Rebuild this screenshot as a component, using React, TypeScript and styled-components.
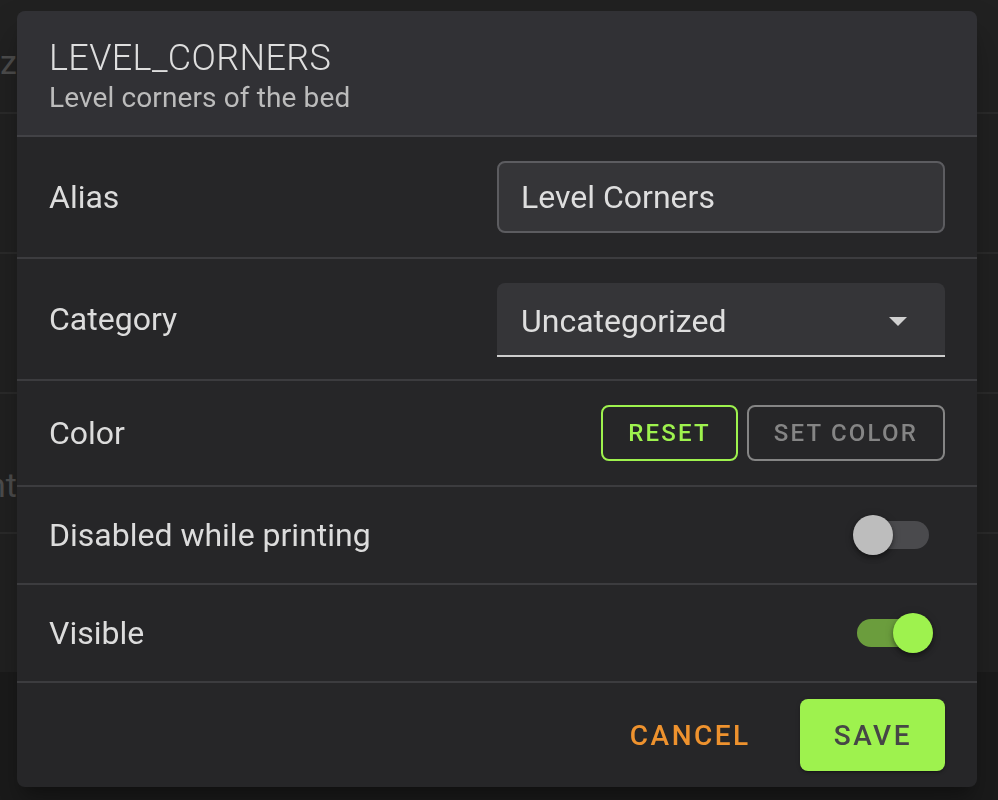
import styled, { createGlobalStyle } from "styled-components";

const GlobalStyle = createGlobalStyle`
  html, body {
    margin: 0;
    padding: 0;
    background: #1b1b1b;
  }
  body {
    font-family: Roboto, "Noto Sans", "Liberation Sans", sans-serif;
    -webkit-font-smoothing: antialiased;
  }
  * {
    box-sizing: border-box;
  }
`;

const Page = styled.div`
  width: 998px;
  height: 800px;
  overflow: hidden;
  background: #1b1b1b;
`;

const List = styled.div`
  background: #212121;
`;

const ListRow = styled.div<{ $h: number; $top: number; $indent?: number; $last?: boolean }>`
  height: ${(p) => p.$h}px;
  padding-top: ${(p) => p.$top}px;
  text-indent: ${(p) => p.$indent ?? 0}px;
  border-bottom: ${(p) => (p.$last ? "none" : "2px solid #2b2b2b")};
  font-size: 34px;
  line-height: 40px;
  color: #4d4d4d;
  white-space: nowrap;
`;

const Overlay = styled.div`
  position: fixed;
  inset: 0;
  padding: 11px 0 0 17px;
`;

const Dialog = styled.div`
  width: 960px;
  background: #262628;
  border-radius: 8px;
  overflow: hidden;
  box-shadow: 0 11px 15px -7px rgba(0, 0, 0, 0.3), 0 24px 38px 3px rgba(0, 0, 0, 0.2);
`;

const Header = styled.div`
  background: #313135;
  padding: 25px 32px 19px;
  border-bottom: 2px solid #424246;
`;

const Title = styled.div`
  font-size: 36px;
  line-height: 44px;
  font-weight: 300;
  letter-spacing: 0.35px;
  color: #dedede;
`;

const Subtitle = styled.div`
  font-size: 28px;
  line-height: 36px;
  letter-spacing: 0.12px;
  color: #bcbcbc;
`;

const Row = styled.div<{ $h: number }>`
  display: grid;
  grid-template-columns: 1fr 1fr;
  align-items: center;
  height: ${(p) => p.$h + 2}px;
  padding: 0 32px;
  border-bottom: 2px solid #3c3c3f;
`;

const Label = styled.div`
  font-size: 32px;
  color: #dcdcdc;
`;

const TextField = styled.input`
  width: 100%;
  height: 72px;
  border: 2px solid #5c5c60;
  border-radius: 8px;
  background: #353538;
  padding: 0 22px;
  font-family: inherit;
  font-size: 32px;
  color: #dedede;
  outline: none;
`;

const Select = styled.div`
  display: flex;
  align-items: center;
  justify-content: space-between;
  height: 74px;
  margin-top: 2px;
  padding: 3px 38px 0 24px;
  background: #353538;
  border-radius: 8px 8px 0 0;
  border-bottom: 2px solid #cdcdcd;
  font-size: 32px;
  color: #dedede;
`;

const Caret = styled.span`
  width: 0;
  height: 0;
  margin-top: 2px;
  border-left: 9px solid transparent;
  border-right: 9px solid transparent;
  border-top: 9px solid #d0d0d0;
`;

const Actions = styled.div`
  justify-self: end;
  display: flex;
  gap: 9px;
`;

const OutlineButton = styled.button<{ $tone: string }>`
  height: 56px;
  padding: 0 25px;
  border: 2px solid ${(p) => p.$tone};
  border-radius: 8px;
  background: transparent;
  color: ${(p) => p.$tone};
  font-family: inherit;
  font-size: 24px;
  font-weight: 500;
  letter-spacing: 2.2px;
`;

const Switch = styled.div`
  justify-self: end;
  position: relative;
  width: 80px;
  height: 40px;
  margin-right: 12px;
`;

const Track = styled.div<{ $on: boolean }>`
  position: absolute;
  left: 4px;
  right: 4px;
  top: 6px;
  bottom: 6px;
  border-radius: 14px;
  background: ${(p) => (p.$on ? "#6b9d3d" : "#4a4a4d")};
`;

const Thumb = styled.div<{ $on: boolean }>`
  position: absolute;
  top: 0;
  left: ${(p) => (p.$on ? "40px" : "0")};
  width: 40px;
  height: 40px;
  border-radius: 50%;
  background: ${(p) => (p.$on ? "#9ef24e" : "#bdbdbd")};
  box-shadow: 0 2px 4px -1px rgba(0, 0, 0, 0.3), 0 4px 5px 0 rgba(0, 0, 0, 0.2), 0 1px 10px 0 rgba(0, 0, 0, 0.15);
`;

const Footer = styled.div`
  display: flex;
  justify-content: flex-end;
  align-items: center;
  gap: 21px;
  padding: 16px 32px;
`;

const TextButton = styled.button`
  height: 72px;
  padding: 0 28px;
  border: none;
  background: transparent;
  color: #ee922e;
  font-family: inherit;
  font-size: 28px;
  font-weight: 500;
  letter-spacing: 2.5px;
`;

const SaveButton = styled.button`
  height: 72px;
  padding: 0 33px 0 34px;
  border: none;
  border-radius: 8px;
  background: #9ef24e;
  color: #464646;
  font-family: inherit;
  font-size: 28px;
  font-weight: 500;
  letter-spacing: 2.5px;
  box-shadow: 0 3px 1px -2px rgba(0, 0, 0, 0.2), 0 2px 2px 0 rgba(0, 0, 0, 0.14), 0 1px 5px 0 rgba(0, 0, 0, 0.12);
`;

const App = () => {
  return (
    <>
      <GlobalStyle />
      <Page>
        <List>
          <ListRow $h={114} $top={42}>z</ListRow>
          <ListRow $h={140} $top={0} />
          <ListRow $h={140} $top={0} />
          <ListRow $h={140} $top={71} $indent={-13}>nt</ListRow>
          <ListRow $h={138} $top={0} $last />
        </List>
      </Page>

      <Overlay>
        <Dialog>
          <Header>
            <Title>LEVEL_CORNERS</Title>
            <Subtitle>Level corners of the bed</Subtitle>
          </Header>

          <Row $h={120}>
            <Label>Alias</Label>
            <TextField defaultValue="Level Corners" />
          </Row>

          <Row $h={120}>
            <Label>Category</Label>
            <Select>
              <span>Uncategorized</span>
              <Caret />
            </Select>
          </Row>

          <Row $h={104}>
            <Label>Color</Label>
            <Actions>
              <OutlineButton $tone="#9ef24e">RESET</OutlineButton>
              <OutlineButton $tone="#858585">SET COLOR</OutlineButton>
            </Actions>
          </Row>

          <Row $h={96}>
            <Label>Disabled while printing</Label>
            <Switch>
              <Track $on={false} />
              <Thumb $on={false} />
            </Switch>
          </Row>

          <Row $h={96}>
            <Label>Visible</Label>
            <Switch>
              <Track $on />
              <Thumb $on />
            </Switch>
          </Row>

          <Footer>
            <TextButton>CANCEL</TextButton>
            <SaveButton>SAVE</SaveButton>
          </Footer>
        </Dialog>
      </Overlay>
    </>
  );
};

export default App;
